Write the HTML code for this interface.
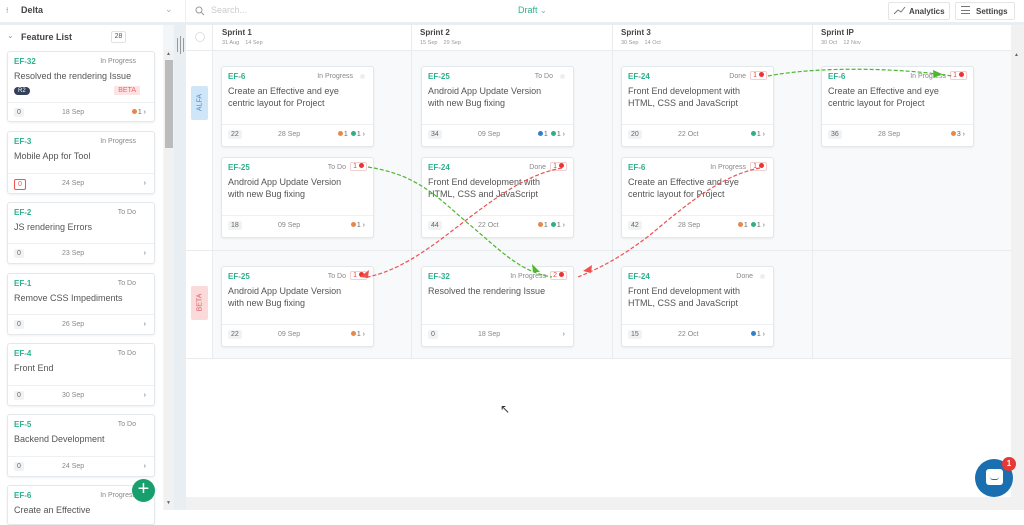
<!DOCTYPE html>
<html><head><meta charset="utf-8"><style>
*{box-sizing:border-box;margin:0;padding:0}
body{width:1024px;height:510px;overflow:hidden;background:#fff;font-family:"Liberation Sans",sans-serif;position:relative;color:#444}
.a{position:absolute}
.card{position:absolute;background:#fff;border:1px solid #e3e8ec;border-radius:3px;box-shadow:0 1px 2px rgba(0,0,0,.06)}
.id{position:absolute;left:6px;top:5px;font-size:8px;color:#2bb08a;font-weight:bold}
.st{position:absolute;top:6px;font-size:7px;color:#888}
.ti{position:absolute;left:6px;top:18px;font-size:9px;line-height:12px;color:#555}
.ft{position:absolute;left:0;right:0;border-top:1px solid #eef1f3}
.cnt{position:absolute;left:6px;font-size:7px;color:#666;background:#f1f2f3;border-radius:2px;padding:1px 3px}
.dt{position:absolute;font-size:7px;color:#888}
.rt{position:absolute;right:8px;font-size:7px;color:#666}
.d{display:inline-block;width:5px;height:5px;border-radius:50%;margin:0 1px 0 3px;vertical-align:0}
.o{background:#e5884a}.g{background:#2bb08a}.b{background:#2f7fcf}
.rd{position:absolute;right:6px;top:4px;font-size:7px;color:#e44;border:1px solid #f0d0d0;padding:0 2px;border-radius:2px;background:#fff}
.rd i{display:inline-block;width:5px;height:5px;border-radius:50%;background:#e33;margin-left:2px}
.gd{position:absolute;right:8px;top:7px;width:5px;height:5px;border-radius:50%;background:#eee}
.hd{position:absolute;top:28px;font-size:8px;font-weight:bold;color:#444}
.hs{position:absolute;top:40px;font-size:5.5px;color:#999}
</style></head><body>
<!-- top bar -->
<div class="a" style="left:0;top:0;width:1024px;height:22px;background:#fff"></div>
<div class="a" style="left:0;top:22px;width:1024px;height:3px;background:#e8eef2"></div>
<div class="a" style="left:185px;top:0;width:1px;height:22px;background:#e8eef2"></div>
<div class="a" style="left:6px;top:5px;font-size:9px;color:#999">⟊</div>
<div class="a" style="left:21px;top:5px;font-size:9px;font-weight:bold;color:#444">Delta</div>
<div class="a" style="left:165px;top:4px;font-size:9px;color:#aaa">⌄</div>
<svg class="a" style="left:195px;top:6px" width="10" height="10"><circle cx="4" cy="4" r="3" fill="none" stroke="#999" stroke-width="1"/><line x1="6.5" y1="6.5" x2="9" y2="9" stroke="#999"/></svg>
<div class="a" style="left:211px;top:5px;font-size:9px;color:#ccc">Search...</div>
<div class="a" style="left:518px;top:5px;font-size:9px;color:#2bb08a">Draft <span style="color:#5bb;font-size:8px">⌄</span></div>
<div class="a" style="left:888px;top:2px;width:62px;height:18px;border:1px solid #e3e6e8;border-radius:2px;font-size:8px;font-weight:bold;color:#444;padding:4px 0 0 20px">Analytics</div>
<svg class="a" style="left:894px;top:6px" width="12" height="9"><polyline points="0,8 4,4 7,6 11,1" fill="none" stroke="#777"/></svg>
<div class="a" style="left:955px;top:2px;width:60px;height:18px;border:1px solid #e3e6e8;border-radius:2px;font-size:8px;font-weight:bold;color:#444;padding:4px 0 0 20px">Settings</div>
<div class="a" style="left:961px;top:6px;width:9px;height:8px;border-top:1px solid #777;border-bottom:1px solid #777"></div>
<div class="a" style="left:961px;top:10px;width:9px;height:1px;background:#777"></div>
<!-- sidebar -->
<div class="a" style="left:0;top:25px;width:174px;height:485px;background:#f3f6f8"></div>
<div class="a" style="left:0;top:25px;width:163px;height:485px;background:#fff"></div>
<div class="a" style="left:7px;top:31px;font-size:8px;color:#999">⌄</div>
<div class="a" style="left:21px;top:32px;font-size:9px;font-weight:bold;color:#444">Feature List</div>
<div class="a" style="left:111px;top:31px;width:15px;height:12px;border:1px solid #e0e3e5;border-radius:2px;font-size:7px;text-align:center;line-height:10px;color:#555">28</div>
<div class="a" style="left:164px;top:50px;width:10px;height:460px;background:#f1f1f1"></div>
<div class="a" style="left:165px;top:60px;width:8px;height:88px;background:#bbb"></div>
<div class="a" style="left:166px;top:51px;font-size:5px;color:#666">▲</div>
<div class="a" style="left:166px;top:500px;font-size:5px;color:#666">▼</div>
<div class="a" style="left:174px;top:25px;width:12px;height:485px;background:#e8eef2"></div>
<div class="a" style="left:177px;top:38px;width:1px;height:14px;background:#999"></div>
<div class="a" style="left:180px;top:36px;width:1px;height:18px;background:#999"></div>
<div class="a" style="left:183px;top:38px;width:1px;height:14px;background:#999"></div>

<div class="card" style="left:7px;top:51px;width:148px;height:71px"><div class="id">EF-32</div><div class="st" style="right:18px">In Progress</div><div class="ti">Resolved the rendering Issue</div>
<div class="a" style="left:6px;top:35px;font-size:6px;color:#fff;background:#34405a;border-radius:5px;padding:1px 4px">R2</div><div class="a" style="right:14px;top:34px;font-size:7px;color:#e66;background:#fde3e3;padding:1px 4px">BETA</div>
<div class="ft" style="top:50px"></div><div class="cnt" style="top:56px">0</div><div class="dt" style="left:54px;top:57px">18 Sep</div><div class="rt" style="top:57px"><span class="d o"></span>1 ›</div></div>
<div class="card" style="left:7px;top:131px;width:148px;height:63px"><div class="id">EF-3</div><div class="st" style="right:18px">In Progress</div><div class="ti">Mobile App for Tool</div>
<div class="ft" style="top:41px"></div><div class="cnt" style="top:47px;border:1px solid #e55;background:#fff;color:#e55">0</div><div class="dt" style="left:54px;top:48px">24 Sep</div><div class="rt" style="top:48px">›</div></div>
<div class="card" style="left:7px;top:202px;width:148px;height:62px"><div class="id">EF-2</div><div class="st" style="right:18px">To Do</div><div class="ti">JS rendering Errors</div>
<div class="ft" style="top:40px"></div><div class="cnt" style="top:46px">0</div><div class="dt" style="left:54px;top:47px">23 Sep</div><div class="rt" style="top:47px">›</div></div>
<div class="card" style="left:7px;top:273px;width:148px;height:62px"><div class="id">EF-1</div><div class="st" style="right:18px">To Do</div><div class="ti">Remove CSS Impediments</div>
<div class="ft" style="top:40px"></div><div class="cnt" style="top:46px">0</div><div class="dt" style="left:54px;top:47px">26 Sep</div><div class="rt" style="top:47px">›</div></div>
<div class="card" style="left:7px;top:343px;width:148px;height:63px"><div class="id">EF-4</div><div class="st" style="right:18px">To Do</div><div class="ti">Front End</div>
<div class="ft" style="top:41px"></div><div class="cnt" style="top:47px">0</div><div class="dt" style="left:54px;top:48px">30 Sep</div><div class="rt" style="top:48px">›</div></div>
<div class="card" style="left:7px;top:414px;width:148px;height:63px"><div class="id">EF-5</div><div class="st" style="right:18px">To Do</div><div class="ti">Backend Development</div>
<div class="ft" style="top:41px"></div><div class="cnt" style="top:47px">0</div><div class="dt" style="left:54px;top:48px">24 Sep</div><div class="rt" style="top:48px">›</div></div>
<div class="card" style="left:7px;top:485px;width:148px;height:40px"><div class="id">EF-6</div><div class="st" style="right:18px">In Progress</div><div class="ti">Create an Effective</div></div>
<div class="a" style="left:132px;top:479px;width:23px;height:23px;border-radius:50%;background:#17a06e;color:#fff;font-size:20px;line-height:21px;text-align:center">+</div>

<!-- board -->
<div class="a" style="left:186px;top:25px;width:825px;height:485px;background:#fff"></div>
<div class="a" style="left:212px;top:50px;width:799px;height:308px;background:#f7f9fa"></div>
<div class="a" style="left:186px;top:50px;width:825px;height:1px;background:#e8ecef"></div>
<div class="a" style="left:186px;top:250px;width:825px;height:1px;background:#e8ecef"></div>
<div class="a" style="left:186px;top:358px;width:825px;height:1px;background:#e8ecef"></div>
<div class="a" style="left:212px;top:25px;width:1px;height:333px;background:#e8ecef"></div>
<div class="a" style="left:411px;top:25px;width:1px;height:333px;background:#e8ecef"></div>
<div class="a" style="left:612px;top:25px;width:1px;height:333px;background:#e8ecef"></div>
<div class="a" style="left:812px;top:25px;width:1px;height:333px;background:#e8ecef"></div>
<div class="a" style="left:195px;top:32px;width:10px;height:10px;border:1px solid #e0e0e0;border-radius:50%"></div>
<div class="hd" style="left:222px">Sprint 1</div><div class="hs" style="left:222px">31 Aug &nbsp;&nbsp; 14 Sep</div>
<div class="hd" style="left:420px">Sprint 2</div><div class="hs" style="left:420px">15 Sep &nbsp;&nbsp; 29 Sep</div>
<div class="hd" style="left:621px">Sprint 3</div><div class="hs" style="left:621px">30 Sep &nbsp;&nbsp; 14 Oct</div>
<div class="hd" style="left:821px">Sprint IP</div><div class="hs" style="left:821px">30 Oct &nbsp;&nbsp; 12 Nov</div>
<div class="a" style="left:191px;top:86px;width:17px;height:34px;background:#cfe5f8;border-radius:2px"></div>
<div class="a" style="left:190px;top:99px;font-size:7px;color:#4a90d0;transform:rotate(-90deg);width:20px;text-align:center">ALFA</div>
<div class="a" style="left:191px;top:286px;width:17px;height:34px;background:#fadada;border-radius:2px"></div>
<div class="a" style="left:190px;top:299px;font-size:7px;color:#e06060;transform:rotate(-90deg);width:20px;text-align:center">BETA</div>
<div class="a" style="left:1011px;top:25px;width:13px;height:485px;background:#f1f1f1"></div>
<div class="a" style="left:1014px;top:52px;font-size:5px;color:#666">▲</div>
<div class="a" style="left:186px;top:497px;width:825px;height:13px;background:#f1f1f1"></div>

<!-- cards row 1 -->
<div class="card" style="left:221px;top:66px;width:153px;height:81px"><div class="id">EF-6</div><div class="st" style="right:20px">In Progress</div><div class="gd"></div><div class="ti">Create an Effective and eye<br>centric layout for Project</div>
<div class="ft" style="top:57px"></div><div class="cnt" style="top:63px">22</div><div class="dt" style="left:56px;top:64px">28 Sep</div><div class="rt" style="top:64px"><span class="d o"></span>1<span class="d g"></span>1 ›</div></div>
<div class="card" style="left:421px;top:66px;width:153px;height:81px"><div class="id">EF-25</div><div class="st" style="right:20px">To Do</div><div class="gd"></div><div class="ti">Android App Update Version<br>with new Bug fixing</div>
<div class="ft" style="top:57px"></div><div class="cnt" style="top:63px">34</div><div class="dt" style="left:56px;top:64px">09 Sep</div><div class="rt" style="top:64px"><span class="d b"></span>1<span class="d g"></span>1 ›</div></div>
<div class="card" style="left:621px;top:66px;width:153px;height:81px"><div class="id">EF-24</div><div class="st" style="right:27px">Done</div><div class="rd">1<i></i></div><div class="ti">Front End development with<br>HTML, CSS and JavaScript</div>
<div class="ft" style="top:57px"></div><div class="cnt" style="top:63px">20</div><div class="dt" style="left:56px;top:64px">22 Oct</div><div class="rt" style="top:64px"><span class="d g"></span>1 ›</div></div>
<div class="card" style="left:821px;top:66px;width:153px;height:81px"><div class="id">EF-6</div><div class="st" style="right:27px">In Progress</div><div class="rd">1<i></i></div><div class="ti">Create an Effective and eye<br>centric layout for Project</div>
<div class="ft" style="top:57px"></div><div class="cnt" style="top:63px">36</div><div class="dt" style="left:56px;top:64px">28 Sep</div><div class="rt" style="top:64px"><span class="d o"></span>3 ›</div></div>
<!-- row 2 -->
<div class="card" style="left:221px;top:157px;width:153px;height:81px"><div class="id">EF-25</div><div class="st" style="right:27px">To Do</div><div class="rd">1<i></i></div><div class="ti">Android App Update Version<br>with new Bug fixing</div>
<div class="ft" style="top:57px"></div><div class="cnt" style="top:63px">18</div><div class="dt" style="left:56px;top:64px">09 Sep</div><div class="rt" style="top:64px"><span class="d o"></span>1 ›</div></div>
<div class="card" style="left:421px;top:157px;width:153px;height:81px"><div class="id">EF-24</div><div class="st" style="right:27px">Done</div><div class="rd">1<i></i></div><div class="ti">Front End development with<br>HTML, CSS and JavaScript</div>
<div class="ft" style="top:57px"></div><div class="cnt" style="top:63px">44</div><div class="dt" style="left:56px;top:64px">22 Oct</div><div class="rt" style="top:64px"><span class="d o"></span>1<span class="d g"></span>1 ›</div></div>
<div class="card" style="left:621px;top:157px;width:153px;height:81px"><div class="id">EF-6</div><div class="st" style="right:27px">In Progress</div><div class="rd">1<i></i></div><div class="ti">Create an Effective and eye<br>centric layout for Project</div>
<div class="ft" style="top:57px"></div><div class="cnt" style="top:63px">42</div><div class="dt" style="left:56px;top:64px">28 Sep</div><div class="rt" style="top:64px"><span class="d o"></span>1<span class="d g"></span>1 ›</div></div>
<!-- row 3 -->
<div class="card" style="left:221px;top:266px;width:153px;height:81px"><div class="id">EF-25</div><div class="st" style="right:27px">To Do</div><div class="rd">1<i></i></div><div class="ti">Android App Update Version<br>with new Bug fixing</div>
<div class="ft" style="top:57px"></div><div class="cnt" style="top:63px">22</div><div class="dt" style="left:56px;top:64px">09 Sep</div><div class="rt" style="top:64px"><span class="d o"></span>1 ›</div></div>
<div class="card" style="left:421px;top:266px;width:153px;height:81px"><div class="id">EF-32</div><div class="st" style="right:27px">In Progress</div><div class="rd">2<i></i></div><div class="ti">Resolved the rendering Issue</div>
<div class="ft" style="top:57px"></div><div class="cnt" style="top:63px">0</div><div class="dt" style="left:56px;top:64px">18 Sep</div><div class="rt" style="top:64px">›</div></div>
<div class="card" style="left:621px;top:266px;width:153px;height:81px"><div class="id">EF-24</div><div class="st" style="right:20px">Done</div><div class="gd"></div><div class="ti">Front End development with<br>HTML, CSS and JavaScript</div>
<div class="ft" style="top:57px"></div><div class="cnt" style="top:63px">15</div><div class="dt" style="left:56px;top:64px">22 Oct</div><div class="rt" style="top:64px"><span class="d b"></span>1 ›</div></div>

<!-- arrows -->
<svg class="a" style="left:0;top:0" width="1024" height="510">
<g fill="none" stroke-width="1.2" stroke-dasharray="4,2">
<path d="M768 76 C820 66 900 68 952 76" stroke="#4cb82a"/>
<path d="M368 167 C420 175 440 200 470 225 C500 250 520 272 552 277" stroke="#4cb82a"/>
<path d="M562 168 C520 175 480 210 440 240 C410 262 390 272 368 277" stroke="#f05050"/>
<path d="M760 168 C720 175 680 210 650 235 C620 258 600 268 578 277" stroke="#f05050"/>
</g>
<polygon points="942,74 933,70 934,78" fill="#4cb82a"/>
<polygon points="540,272 532,264 533,272" fill="#4cb82a"/>
<polygon points="360,277 369,270 368,278" fill="#f05050"/>
<polygon points="583,271 592,265 591,273" fill="#f05050"/>
</svg>

<!-- chat -->
<div class="a" style="left:975px;top:459px;width:38px;height:38px;border-radius:50%;background:#1a6fb0"></div>
<div class="a" style="left:986px;top:469px;width:17px;height:16px;background:#fff;border-radius:3px"></div>
<div class="a" style="left:990px;top:477px;width:9px;height:3px;border-bottom:1.5px solid #1a6fb0;border-radius:0 0 5px 5px"></div>
<div class="a" style="left:1002px;top:457px;width:14px;height:14px;border-radius:50%;background:#e53935;color:#fff;font-size:8px;text-align:center;line-height:14px;font-weight:bold">1</div>
<div class="a" style="left:500px;top:402px;font-size:12px;color:#333">↖</div>
</body></html>
